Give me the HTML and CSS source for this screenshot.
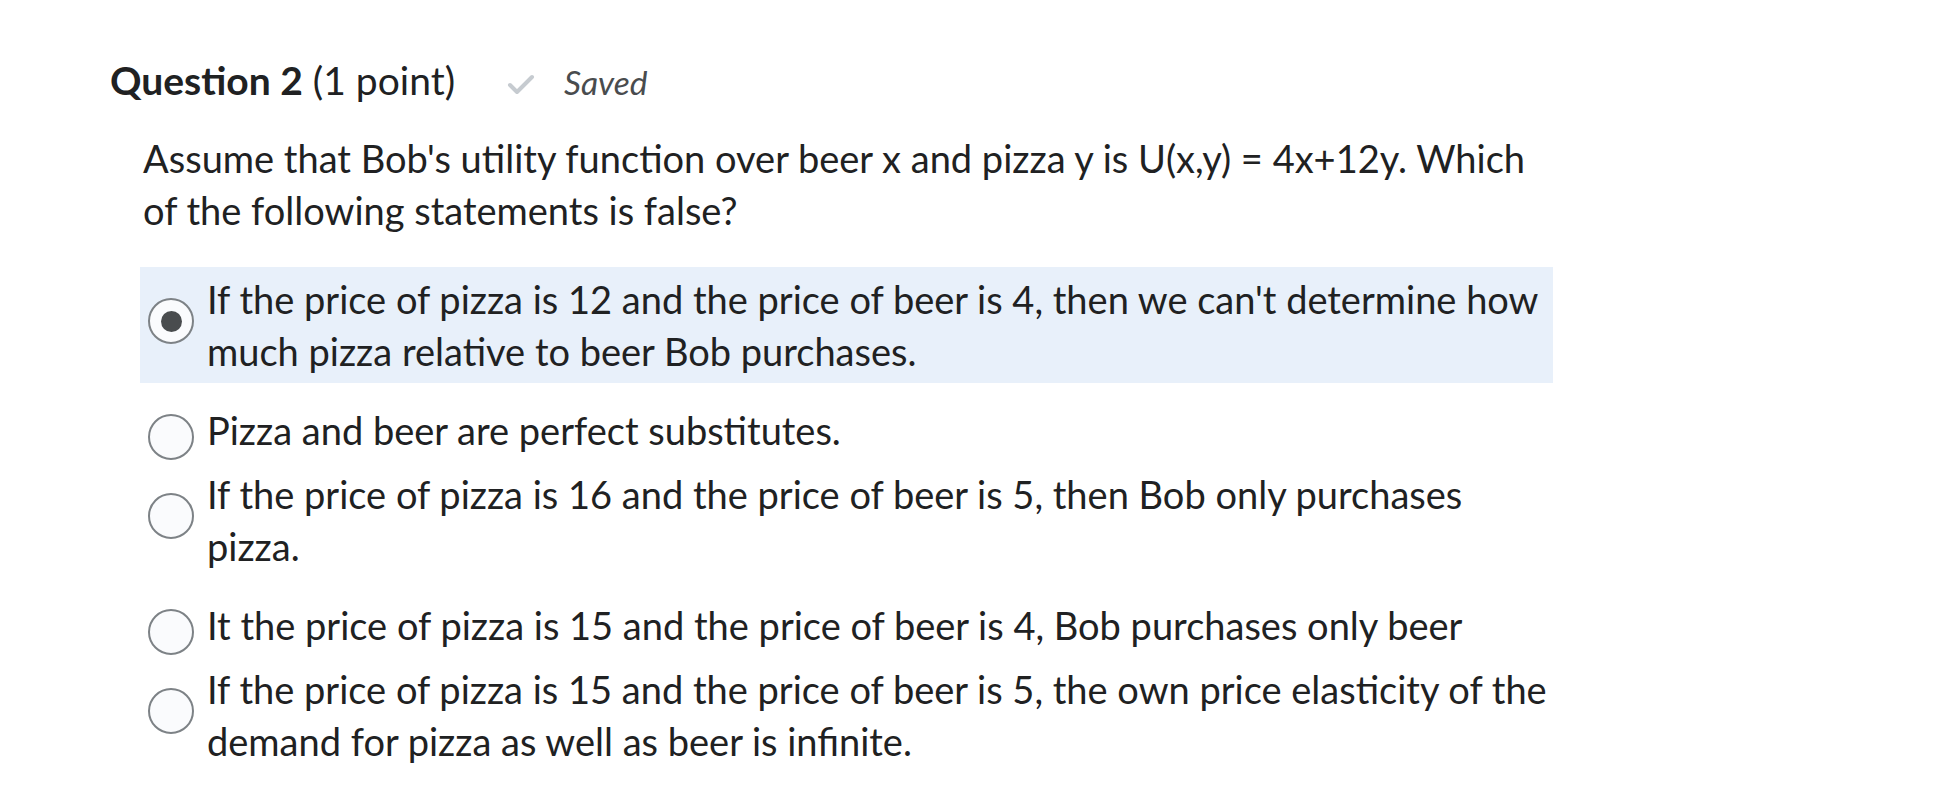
FILE: index.html
```html
<!DOCTYPE html>
<html lang="en">
<head>
<meta charset="utf-8">
<title>Question 2</title>
<link rel="stylesheet" href="styles.css">
</head>
<body>
<div class="page">
  <div class="q-header">
    <h2 class="q-title"><strong>Question 2</strong> (1 point)</h2>
    <span class="saved">
      <svg class="check" width="28" height="22" viewBox="0 0 28 22" aria-hidden="true">
        <polyline points="3,12 10,19 25,4" fill="none" stroke="#c6cbd0" stroke-width="4" stroke-linecap="round" stroke-linejoin="round"/>
      </svg>
      <em>Saved</em>
    </span>
  </div>
  <div class="q-body">
    <p class="q-text">Assume that Bob's utility function over beer x and pizza y is U(x,y) = 4x+12y. Which of the following statements is false?</p>
  </div>
  <div class="options">
    <label class="opt multi selected">
      <span class="radio checked"></span>
      <span class="opt-text">If the price of pizza is 12 and the price of beer is 4, then we can't determine how much pizza relative to beer Bob purchases.</span>
    </label>
    <label class="opt">
      <span class="radio"></span>
      <span class="opt-text">Pizza and beer are perfect substitutes.</span>
    </label>
    <label class="opt multi">
      <span class="radio"></span>
      <span class="opt-text">If the price of pizza is 16 and the price of beer is 5, then Bob only purchases pizza.</span>
    </label>
    <label class="opt">
      <span class="radio"></span>
      <span class="opt-text">It the price of pizza is 15 and the price of beer is 4, Bob purchases only beer</span>
    </label>
    <label class="opt multi">
      <span class="radio"></span>
      <span class="opt-text">If the price of pizza is 15 and the price of beer is 5, the own price elasticity of the demand for pizza as well as beer is infinite.</span>
    </label>
  </div>
</div>
</body>
</html>
```

FILE: styles.css
```css
html, body {
  margin: 0;
  padding: 0;
  background: #ffffff;
}

body {
  font-family: Lato, "Noto Sans", sans-serif;
  color: #202122;
}

.page {
  padding: 57px 0 0 110px;
  width: 1443px;
}

.q-header {
  display: flex;
  align-items: baseline;
}

.q-title {
  margin: 0;
  font-size: 39px;
  line-height: 46px;
  font-weight: 400;
}

.q-title strong {
  font-weight: 700;
}

.saved {
  display: flex;
  align-items: baseline;
  margin-left: 52px;
  font-size: 33.5px;
  color: #494c4e;
}

.saved .check {
  align-self: center;
  margin-right: 29px;
  margin-top: 4px;
}

.saved em {
  font-style: italic;
}

.q-body {
  padding: 29px 0 0 33px;
}

.q-text {
  margin: 0;
  font-size: 38px;
  line-height: 52px;
  width: 1410px;
}

.options {
  margin: 31px 0 0 30px;
  width: 1413px;
}

.opt {
  display: flex;
  align-items: flex-start;
  padding: 6px 0 2px 8px;
}

.opt.multi {
  padding-bottom: 6px;
  margin-bottom: 15px;
}

.opt.selected {
  background: #e8f0fa;
}

.radio {
  flex: none;
  box-sizing: border-box;
  width: 46px;
  height: 46px;
  border: 2px solid #7d8286;
  border-radius: 50%;
  background: #fafbfd;
  margin-top: 10px;
  display: flex;
  align-items: center;
  justify-content: center;
}

.opt.multi .radio {
  margin-top: 25px;
}

.radio.checked::after {
  content: "";
  width: 21px;
  height: 21px;
  border-radius: 50%;
  background: #494c4e;
}

.opt-text {
  margin-left: 13px;
  font-size: 38px;
  line-height: 52px;
}
```
